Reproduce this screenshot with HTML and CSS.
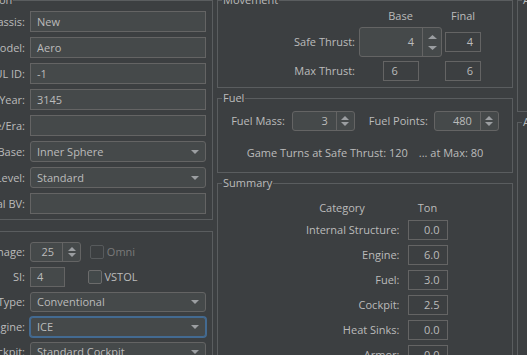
FILE: index.html
```html
<!DOCTYPE html>
<html lang="en">
<head>
  <meta charset="UTF-8">
  <title>Aero Structure</title>
  <meta name="viewport" content="width=device-width, initial-scale=1.0">
  <link rel="stylesheet" href="styles.css">
</head>
<body>
  <div class="frame">

    <!-- left column -->
    <div class="col col-left">
      <fieldset class="panel panel-basic">
        <legend>Basic Information</legend>
        <div class="form form-basic">
          <label>Chassis:</label><div class="field wide">New</div>
          <label>Model:</label><div class="field wide">Aero</div>
          <label>MUL ID:</label><div class="field wide">-1</div>
          <label>Year:</label><div class="field wide">3145</div>
          <label>Source/Era:</label><div class="field wide"></div>
          <label>Tech Base:</label>
          <div class="combo wide"><span>Inner Sphere</span><svg class="caret" width="8" height="4"><polygon points="0,0 8,0 4,4"/></svg></div>
          <label>Tech Level:</label>
          <div class="combo wide"><span>Standard</span><svg class="caret" width="8" height="4"><polygon points="0,0 8,0 4,4"/></svg></div>
          <label>Manual BV:</label><div class="field wide"></div>
        </div>
      </fieldset>

      <fieldset class="panel panel-chassis">
        <legend>Chassis</legend>
        <div class="form form-chassis">
          <label>Tonnage:</label>
          <div class="spinner sp-ton">
            <span class="val">25</span>
            <span class="btns"><svg width="8" height="10"><polygon points="0,4 8,4 4,0"/><polygon points="0,6 8,6 4,10"/></svg></span>
          </div>
          <div class="check-cell"><span class="check disabled"><span class="box"></span>Omni</span></div>

          <label>SI:</label>
          <div class="field small">4</div>
          <div class="check-cell"><span class="check"><span class="box"></span>VSTOL</span></div>

          <label>Type:</label>
          <div class="combo wide"><span>Conventional</span><svg class="caret" width="8" height="4"><polygon points="0,0 8,0 4,4"/></svg></div>
          <label>Engine:</label>
          <div class="combo wide focused"><span>ICE</span><svg class="caret" width="8" height="4"><polygon points="0,0 8,0 4,4"/></svg></div>
          <label>Cockpit:</label>
          <div class="combo wide"><span>Standard Cockpit</span><svg class="caret" width="8" height="4"><polygon points="0,0 8,0 4,4"/></svg></div>
        </div>
      </fieldset>
    </div>

    <!-- middle column -->
    <div class="col col-mid">
      <fieldset class="panel panel-movement">
        <legend>Movement</legend>
        <div class="mv">
          <span></span><span class="head">Base</span><span class="head">Final</span>

          <label>Safe Thrust:</label>
          <div class="spinner sp-tall">
            <span class="val">4</span>
            <span class="btns"><svg width="9" height="15"><polygon points="0,4 9,4 4.5,0"/><polygon points="0,11 9,11 4.5,15"/></svg></span>
          </div>
          <div class="field ro num">4</div>

          <label>Max Thrust:</label>
          <div class="field ro base-max">6</div>
          <div class="field ro num">6</div>
        </div>
      </fieldset>

      <fieldset class="panel panel-fuel">
        <legend>Fuel</legend>
        <div class="fuel-row">
          <label class="fuel-mass">Fuel Mass:</label>
          <div class="spinner sp-mass">
            <span class="val">3</span>
            <span class="btns"><svg width="8" height="10"><polygon points="0,4 8,4 4,0"/><polygon points="0,6 8,6 4,10"/></svg></span>
          </div>
          <label class="fuel-points">Fuel Points:</label>
          <div class="spinner sp-points">
            <span class="val">480</span>
            <span class="btns"><svg width="8" height="10"><polygon points="0,4 8,4 4,0"/><polygon points="0,6 8,6 4,10"/></svg></span>
          </div>
        </div>
        <div class="fuel-note">
          <span>Game Turns at Safe Thrust: 120</span>
          <span>... at Max: 80</span>
        </div>
      </fieldset>

      <fieldset class="panel panel-summary">
        <legend>Summary</legend>
        <div class="sum">
          <span class="head">Category</span><span class="head">Ton</span>
          <label>Internal Structure:</label><div class="field ro num">0.0</div>
          <label>Engine:</label><div class="field ro num">6.0</div>
          <label>Fuel:</label><div class="field ro num">3.0</div>
          <label>Cockpit:</label><div class="field ro num">2.5</div>
          <label>Heat Sinks:</label><div class="field ro num">0.0</div>
          <label>Armor:</label><div class="field ro num">0.0</div>
          <label>Weapons:</label><div class="field ro num">0.0</div>
        </div>
      </fieldset>
    </div>

    <!-- right column -->
    <div class="col col-right">
      <fieldset class="panel panel-armor">
        <legend>Armor</legend>
      </fieldset>
      <fieldset class="panel panel-alloc">
        <legend>Armor Allocation</legend>
      </fieldset>
    </div>

  </div>
</body>
</html>
```

FILE: styles.css
```css
* {
  box-sizing: border-box;
}

html, body {
  height: 100%;
}

body {
  margin: 0;
  background: #3c3f41;
  color: #bbbbbb;
  font-family: 'Open Sans', 'Noto Sans', sans-serif;
  font-size: 11px;
  line-height: 14px;
  overflow: hidden;
}

.frame {
  display: flex;
  align-items: flex-start;
  margin-left: -84px;
  margin-top: -7px;
}

.col {
  display: flex;
  flex-direction: column;
  flex-shrink: 0;
}

.col-mid {
  width: 296px;
  margin-left: 4px;
}

.col-right {
  width: 140px;
  margin-left: 4px;
}

/* titled border panels */
.panel {
  margin: 0;
  padding: 0;
  border: 1px solid #5a5d5f;
  min-width: 0;
}

.panel legend {
  margin-left: 4px;
  padding: 0 1px;
  line-height: 14px;
}

.panel + .panel {
  margin-top: 3px;
}

/* left forms */
.panel-basic {
  width: 297px;
  padding: 4px 6px 5px 0;
}

.panel-chassis {
  width: 297px;
  margin-top: 4px !important;
  padding: 4px 6px 20px 0;
}

.form {
  display: grid;
  grid-template-columns: 113px 50px 126px;
  row-gap: 5px;
  align-items: center;
}

.form-basic {
  grid-auto-rows: 21px;
}

.form-chassis {
  grid-auto-rows: 20px;
}

.form label {
  text-align: right;
  padding-right: 5px;
  white-space: nowrap;
}

.wide {
  grid-column: 2 / 4;
}

/* inputs */
.field {
  height: 100%;
  border: 1px solid #646464;
  background: #45494a;
  padding: 0 6px;
  display: flex;
  align-items: center;
  white-space: nowrap;
}

.field.ro {
  background: #3c3f41;
}

.field.num {
  justify-content: flex-end;
  padding-right: 7px;
}

.field.small {
  width: 35px;
}

.combo {
  height: 100%;
  border: 1px solid #646464;
  border-radius: 3px;
  background: #45494a;
  padding: 0 6px;
  display: flex;
  align-items: center;
  justify-content: space-between;
  white-space: nowrap;
}

.combo.focused {
  border-color: #436a91;
  box-shadow: 0 0 0 1px #436a91;
}

.caret,
.btns svg {
  fill: #9b9ea1;
}

.spinner {
  height: 20px;
  border: 1px solid #646464;
  border-radius: 3px;
  background: #45494a;
  display: flex;
}

.spinner .val {
  flex: 1;
  display: flex;
  align-items: center;
  justify-content: flex-end;
  padding-right: 8px;
}

.spinner .btns {
  width: 18px;
  border-left: 1px solid #646464;
  display: flex;
  align-items: center;
  justify-content: center;
}

.sp-ton {
  width: 51px;
}

.sp-tall {
  height: 30px;
}

.sp-tall .btns {
  width: 19px;
}

.sp-mass {
  width: 63px;
}

.sp-points {
  width: 65px;
}

/* checkboxes */
.check-cell {
  width: 65px;
  display: flex;
  justify-content: center;
}

.check {
  display: flex;
  align-items: center;
  white-space: nowrap;
}

.check .box {
  width: 14px;
  height: 14px;
  border: 1px solid #6b6b6b;
  border-radius: 2px;
  background: #43494a;
  margin-right: 3px;
}

.check.disabled {
  color: #7a7a7a;
}

.check.disabled .box {
  border-color: #575a5c;
  background: transparent;
}

/* movement */
.panel-movement {
  padding: 2px 0 6px;
}

.mv {
  display: grid;
  grid-template-columns: 107px 83px 36px;
  grid-template-rows: 14px 30px 20px;
  column-gap: 3px;
  row-gap: 4px;
  justify-content: center;
  align-items: center;
}

.mv label {
  text-align: right;
  padding-right: 1px;
}

.head {
  text-align: center;
}

.mv .field {
  height: 20px;
}

.base-max {
  width: 36px;
  justify-self: center;
  padding-left: 8px;
}

/* fuel */
.panel-fuel {
  padding: 6px 0 12px;
}

.fuel-row {
  display: flex;
  justify-content: center;
  align-items: center;
}

.fuel-mass {
  margin-right: 7px;
}

.fuel-points {
  margin: 0 6px 0 14px;
}

.fuel-note {
  display: flex;
  justify-content: center;
  gap: 11px;
  margin-top: 15px;
}

/* summary */
.panel-summary {
  padding: 11px 0 20px;
}

.sum {
  display: grid;
  grid-template-columns: 119px 40px;
  grid-template-rows: 14px;
  grid-auto-rows: 20px;
  column-gap: 6px;
  row-gap: 5px;
  justify-content: center;
  align-items: center;
}

.sum label {
  text-align: right;
  padding-right: 2px;
}

.sum .field {
  height: 20px;
}

/* right column */
.panel-armor {
  height: 119px;
}

.panel-alloc {
  height: 300px;
}
```
